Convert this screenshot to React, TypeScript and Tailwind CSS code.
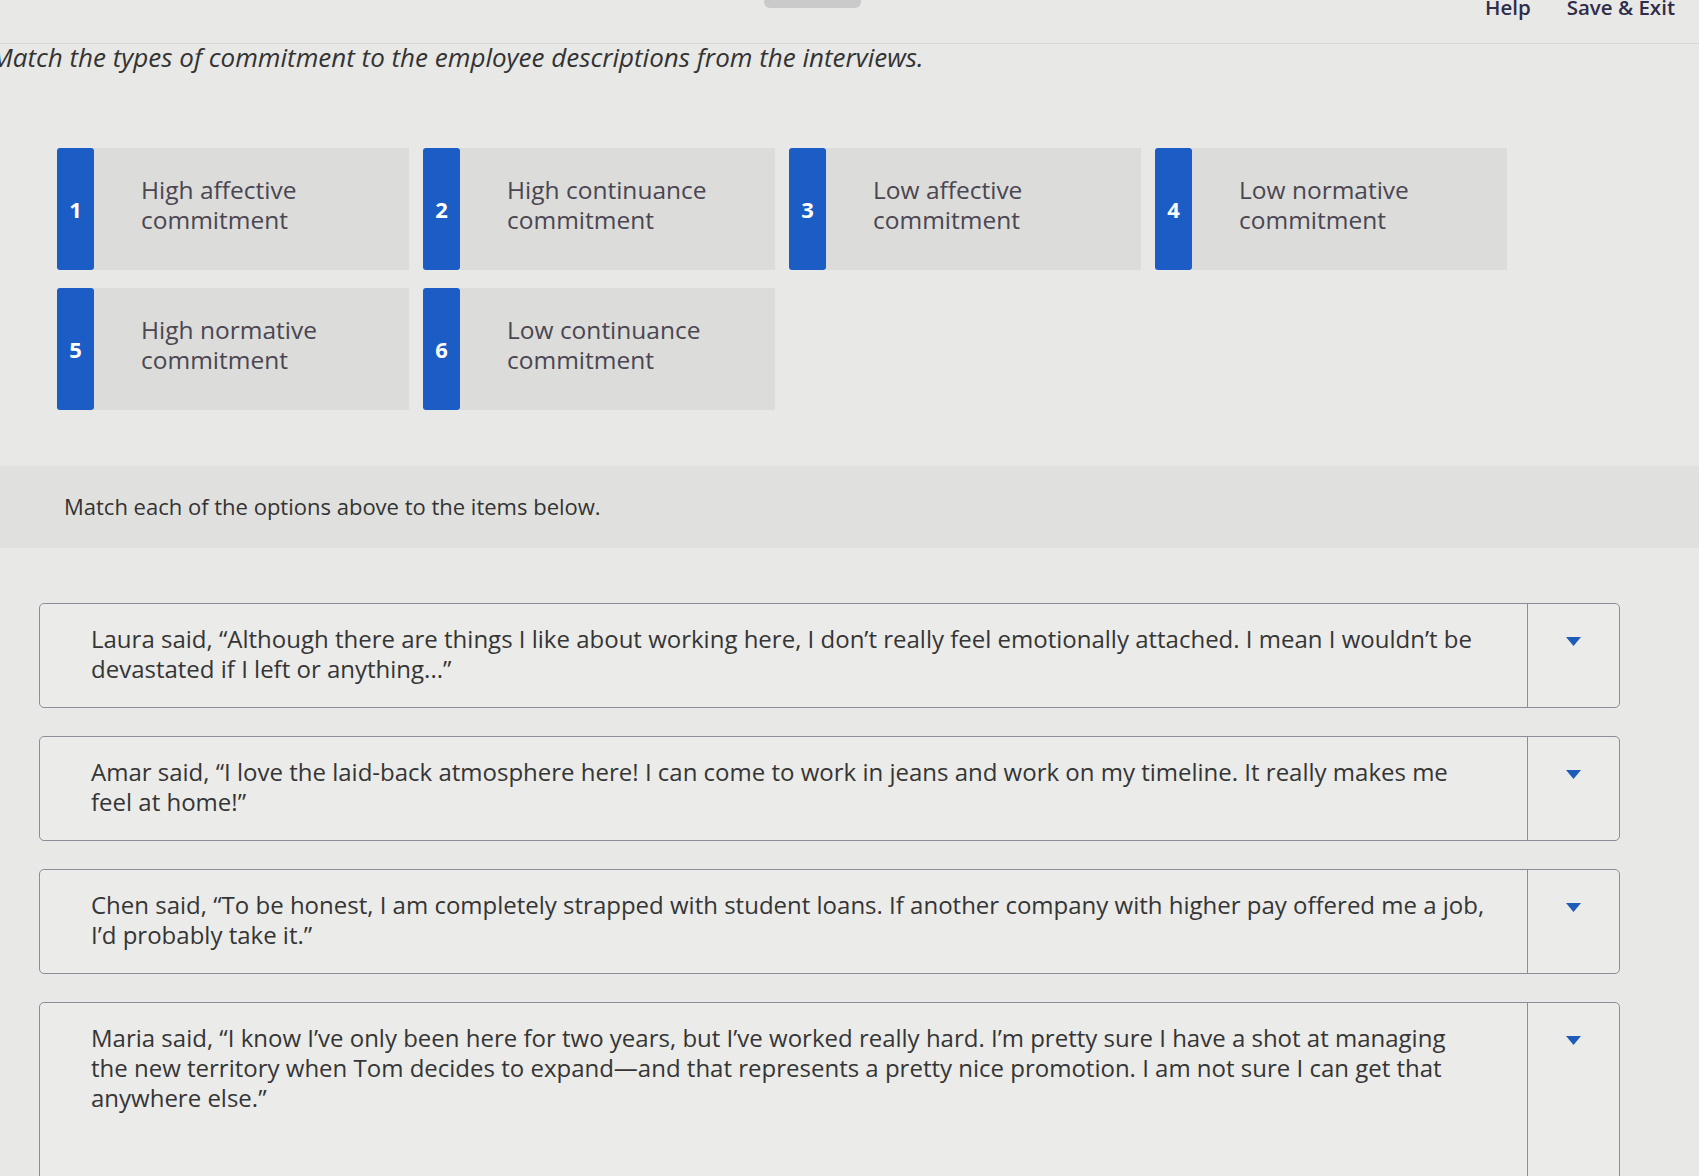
import React from "react";

const options = [
  { n: "1", a: "High affective", b: "commitment" },
  { n: "2", a: "High continuance", b: "commitment" },
  { n: "3", a: "Low affective", b: "commitment" },
  { n: "4", a: "Low normative", b: "commitment" },
  { n: "5", a: "High normative", b: "commitment" },
  { n: "6", a: "Low continuance", b: "commitment" },
];

const items: string[][] = [
  [
    "Laura said, “Although there are things I like about working here, I don’t really feel emotionally attached. I mean I wouldn’t be",
    "devastated if I left or anything...”",
  ],
  [
    "Amar said, “I love the laid-back atmosphere here! I can come to work in jeans and work on my timeline. It really makes me",
    "feel at home!”",
  ],
  [
    "Chen said, “To be honest, I am completely strapped with student loans. If another company with higher pay offered me a job,",
    "I’d probably take it.”",
  ],
  [
    "Maria said, “I know I’ve only been here for two years, but I’ve worked really hard. I’m pretty sure I have a shot at managing",
    "the new territory when Tom decides to expand—and that represents a pretty nice promotion. I am not sure I can get that",
    "anywhere else.”",
  ],
];

function Card({ n, a, b }: { n: string; a: string; b: string }) {
  return (
    <div className="flex h-[122px]">
      <div className="w-[37px] shrink-0 bg-[#1c5cc5] rounded-[3px] flex items-center justify-center text-white font-bold text-[22px]">
        {n}
      </div>
      <div className="flex-1 bg-[#dcdcda] pl-[47px] flex items-center">
        <div className="text-[24.5px] leading-[30px] text-[#4a4652] -mt-[8px]">
          <div>{a}</div>
          <div>{b}</div>
        </div>
      </div>
    </div>
  );
}

function Item({ lines, last }: { lines: string[]; last?: boolean }) {
  return (
    <div
      className={
        "flex border-[1.5px] border-[#8e8c9b] rounded-[5px] bg-[#ebebe9] " +
        (last ? "min-h-[180px]" : "")
      }
    >
      <div className="flex-1 pl-[51px] pr-[10px] pt-[20px] pb-[23px] text-[24px] leading-[30px] text-[#353535]">
        {lines.map((l, i) => (
          <div key={i} className="whitespace-nowrap">
            {l}
          </div>
        ))}
      </div>
      <div className="w-[92px] shrink-0 border-l-[1.5px] border-[#8e8c9b] flex justify-center pt-[32px]">
        <svg width="17" height="11" viewBox="0 0 17 11">
          <path d="M1 1 L16 1 L8.5 10 Z" fill="#1f5bb8" />
        </svg>
      </div>
    </div>
  );
}

export default function App() {
  return (
    <div
      className="relative w-[1699px] h-[1176px] overflow-hidden bg-[#e8e8e6]"
      style={{ fontFamily: "'Open Sans', Lato, sans-serif" }}
    >
      <div className="absolute left-[764px] -top-[12px] w-[97px] h-[20px] rounded-[6px] bg-[#cacaca]" />
      {/* header */}
      <div className="h-[44px] border-b border-[#d8d8d6] flex justify-end items-start gap-[36px] pr-[24px]">
        <span className="-mt-[8px] text-[20.5px] font-semibold text-[#2f2d4a]">Help</span>
        <span className="-mt-[8px] text-[20.5px] font-semibold text-[#2f2d4a]">Save &amp; Exit</span>
      </div>

      <div className="-ml-[9px] -mt-[3px] text-[26px] leading-[32px] italic text-[#333]">
        Match the types of commitment to the employee descriptions from the interviews.
      </div>

      <div className="ml-[57px] mt-[75px] w-[1450px] grid grid-cols-4 gap-x-[14px] gap-y-[18px]">
        {options.map((o) => (
          <Card key={o.n} {...o} />
        ))}
      </div>

      <div className="mt-[56px] h-[82px] bg-[#e0e0de] pl-[64px] pt-[26px]">
        <div className="text-[22px] leading-[28px] text-[#333]">
          Match each of the options above to the items below.
        </div>
      </div>

      <div className="ml-[39px] mt-[55px] w-[1581px] flex flex-col gap-[28px]">
        {items.map((l, i) => (
          <Item key={i} lines={l} last={i === items.length - 1} />
        ))}
      </div>
    </div>
  );
}
